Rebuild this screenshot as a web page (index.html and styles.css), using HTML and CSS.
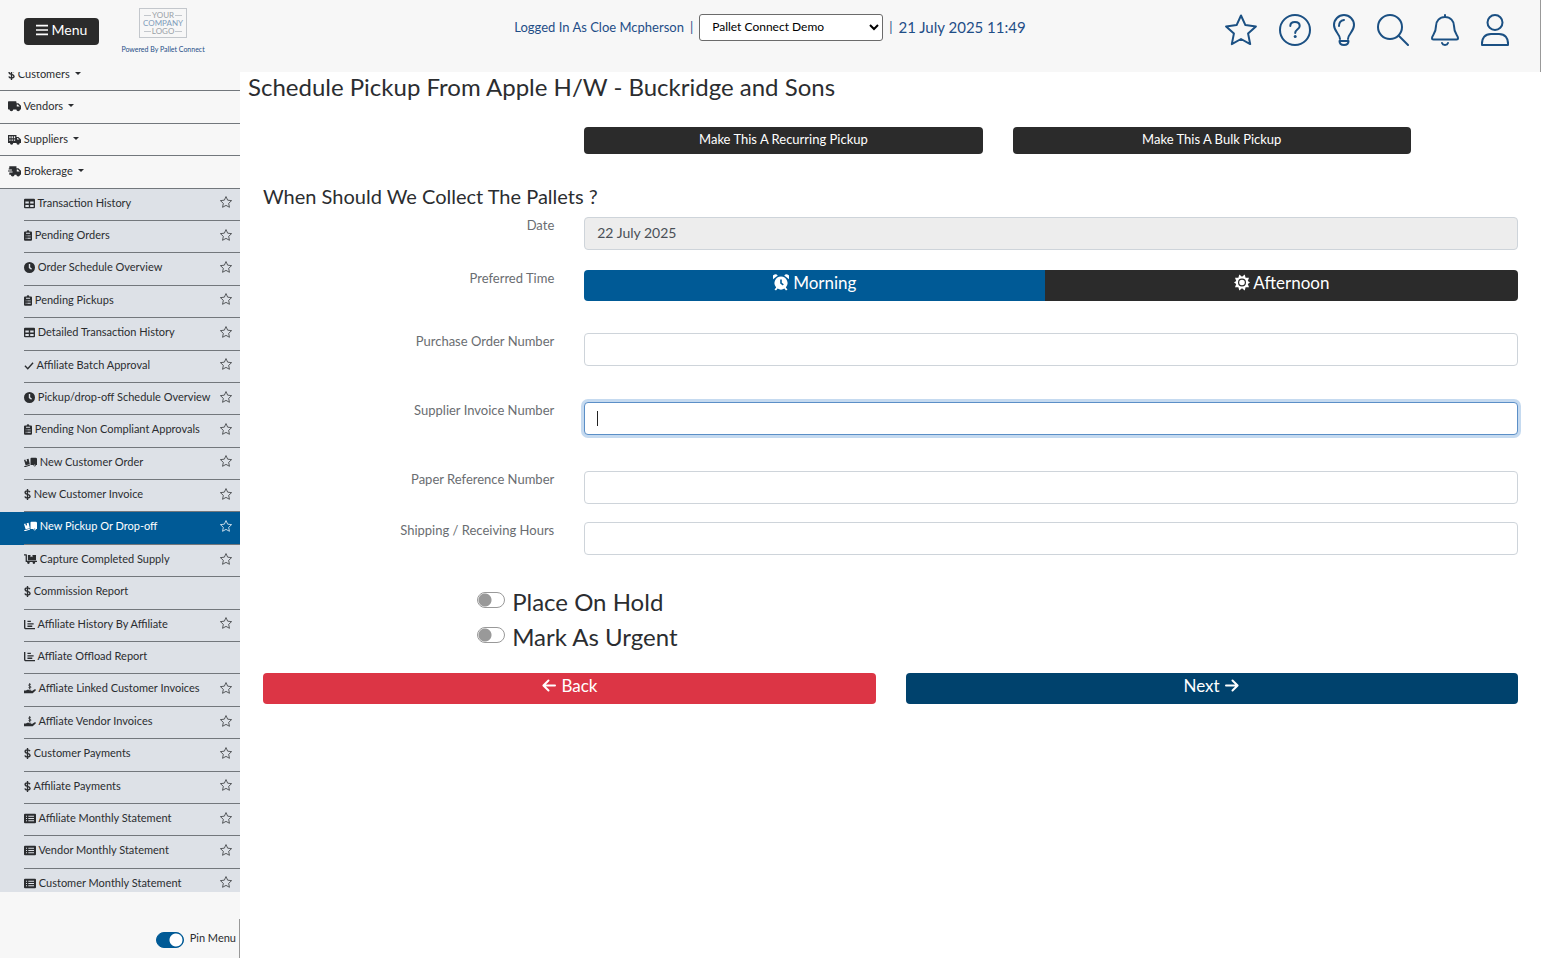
FILE: index.html
```html
<!DOCTYPE html>
<html lang="en">
<head>
    <meta charset="UTF-8">
    <title>Schedule Pickup</title>
    <link rel="stylesheet" href="styles.css">
</head>
<body>
    <!-- icon set -->
    <svg class="sprite" aria-hidden="true">
        <symbol id="bars" viewBox="0 0 14 16"><path d="M0 3h14M0 8h14M0 13h14" fill="none" stroke="currentColor" stroke-width="2"/></symbol>
        <symbol id="dollar" viewBox="0 0 10 16"><path d="M5 0v16M8.6 4.6C8 3.3 6.600 2.800 5 2.800 3 2.800 1.500 3.700 1.500 5.300c0 3.500 7.200 1.700 7.200 5.300 0 1.700-1.600 2.600-3.700 2.600-2 0-3.400-.8-3.900-2.200" fill="none" stroke="currentColor" stroke-width="2"/></symbol>
        <symbol id="truck" viewBox="0 0 20 16"><path fill-rule="evenodd" d="M1 0h11a1 1 0 0 1 1 1v2h3l4 4v5.500h-1.500a2.800 2.800 0 0 1-5.600 0H8a2.800 2.800 0 0 1-5.600 0H1a1 1 0 0 1-1-1V1a1 1 0 0 1 1-1zm12.500 4.800V8H18l-3-3.200z"/></symbol>
        <symbol id="truck-grid" viewBox="0 0 20 16"><path fill-rule="evenodd" d="M0 1h13v3h3l4 4v5.500h-2a2.500 2.500 0 0 1-5 0H8a2.500 2.500 0 0 1-5 0H0zm2 2v3h2V3zm3.500 0v3h2V3zM9 3v3h2V3zM2 8v2h2V8zm3.500 0v2h2V8zM9 8v2h2V8zm5-2.500V8h3.500L15 5.500z"/></symbol>
        <symbol id="truck-fast" viewBox="0 0 20 16"><path fill-rule="evenodd" d="M2 0h11v3h3l4 4v6h-1.500a2.800 2.800 0 0 1-5.600 0H10a2.800 2.800 0 0 1-5.600 0H2V9.500h5V8H0V6.500h6V5H1V3.500h1zm11.500 4.800V8H18l-3-3.200z"/></symbol>
        <symbol id="table" viewBox="0 0 16 16"><path fill-rule="evenodd" d="M1.500 1h13A1.500 1.500 0 0 1 16 2.500v11a1.500 1.500 0 0 1-1.500 1.500h-13A1.500 1.500 0 0 1 0 13.500v-11A1.500 1.500 0 0 1 1.500 1zM2 5v3h5V5zm7 0v3h5V5zM2 10v3h5v-3zm7 0v3h5v-3z"/></symbol>
        <symbol id="clipboard" viewBox="0 0 12 16"><path fill-rule="evenodd" d="M1.500 2H4a2 2 0 0 1 4 0h2.500A1.500 1.500 0 0 1 12 3.500v11a1.500 1.500 0 0 1-1.500 1.500h-9A1.500 1.500 0 0 1 0 14.500v-11A1.500 1.500 0 0 1 1.500 2zM3 4v1.200h6V4zM2.500 8v1.300h1.300V8zm2.500 0v1.300h5V8zm-2.500 3.500v1.300h1.300v-1.300zm2.500 0v1.300h5v-1.300z"/></symbol>
        <symbol id="clock" viewBox="0 0 16 16"><path fill-rule="evenodd" d="M8 0a8 8 0 1 1 0 16A8 8 0 0 1 8 0zM7 3v5.600l3.500 2.500 1-1.500L9 7.800V3z"/></symbol>
        <symbol id="check" viewBox="0 0 16 16"><path d="M1.500 8.500L6 13l8.500-9.500" fill="none" stroke="currentColor" stroke-width="2.200"/></symbol>
        <symbol id="loader" viewBox="0 0 20 16"><path fill-rule="evenodd" d="M10 2a1.500 1.500 0 0 1 1.500-1.500H18A2 2 0 0 1 20 2.500V12h-1.500a2 2 0 0 1-4 0H10zM0 4l2-.6 1 3.200 1.800-.5L4 3l3-.8 2 8.400-6.500 1.800zM0 13.600l9-2.300.5 1.500-7 2a2 2 0 0 1-2.500-1.200zM15.500 12a1 1 0 0 0 2 0 1 1 0 0 0-2 0z"/></symbol>
        <symbol id="dolly" viewBox="0 0 20 16"><path fill-rule="evenodd" d="M0 0h3.500a1 1 0 0 1 1 1v9H20v2h-3a2 2 0 1 1-3.600 0H8.600A2 2 0 1 1 5 12H3.500a1 1 0 0 1-1-1V2H0zM6 1h4v3.500l1.500-1 1.500 1V1h5.500v8H6z"/></symbol>
        <symbol id="chart" viewBox="0 0 16 16"><path d="M1 1.500v11A1.500 1.500 0 0 0 2.500 14H16M5 3.500h5M5 7h9M5 10.500h7" fill="none" stroke="currentColor" stroke-width="2"/></symbol>
        <symbol id="hand" viewBox="0 0 18 16"><path d="M0 11h3l2-1.300h5.500c1 0 1 1.500 0 1.600H8v.6h4l4-2.700c1.300-.7 2.500.6 1.500 1.700L13 15H0z"/><path d="M8.500 0v9M10.300 2.300C9.500 1.300 7 1.400 7 3c0 1.800 3.500 1 3.500 2.900 0 1.600-2.800 1.700-3.700.6" fill="none" stroke="currentColor" stroke-width="1.300"/></symbol>
        <symbol id="list" viewBox="0 0 18 16"><path fill-rule="evenodd" d="M1.500 1h15A1.500 1.500 0 0 1 18 2.500v11a1.500 1.500 0 0 1-1.500 1.500h-15A1.500 1.500 0 0 1 0 13.500v-11A1.500 1.500 0 0 1 1.500 1zM3 4v1.500h1.500V4zm3.500 0v1.500H15V4zM3 7.300v1.500h1.500V7.300zm3.500 0v1.500H15V7.300zM3 10.500V12h1.500v-1.500zm3.500 0V12H15v-1.500z"/></symbol>
        <symbol id="star" viewBox="0 0 32 32"><path d="M16 1.500l4.400 9.600 10.500 1.300-7.800 7.200 2.100 10.500L16 25l-9.200 5.100 2.100-10.500-7.800-7.200 10.500-1.300z" fill="none" stroke="currentColor" stroke-width="2" stroke-linejoin="round"/></symbol>
        <symbol id="alarm" viewBox="0 0 16 16"><path fill-rule="evenodd" d="M8 2a6.500 6.500 0 0 1 4.800 10.900L14.500 15 13 16l-1.600-1.900a6.500 6.500 0 0 1-6.800 0L3 16l-1.500-1 1.700-2.100A6.500 6.500 0 0 1 8 2zM7.200 5v4l2.600 2 1-1.300-2-1.500V5zM0 4.700A3 3 0 0 1 4.800 1zM16 4.700A3 3 0 0 0 11.200 1z"/></symbol>
        <symbol id="sun" viewBox="0 0 16 16"><path fill-rule="evenodd" d="M8 2.200L10.700 0l.9 3.300L15 3.200 13.800 6.400 16 8l-2.200 1.600L15 12.800l-3.400-.1-.9 3.300L8 13.800 5.300 16l-.9-3.300-3.400.1 1.200-3.200L0 8l2.200-1.600L1 3.200l3.400.1L5.300 0zM8 4a4 4 0 1 0 0 8 4 4 0 0 0 0-8zm0 1.200a2.800 2.800 0 1 1 0 5.600 2.800 2.800 0 0 1 0-5.600z"/></symbol>
        <symbol id="left" viewBox="0 0 16 16"><path d="M14 8H2.500M7.500 3L2.400 8l5.100 5" fill="none" stroke="currentColor" stroke-width="2" stroke-linecap="round" stroke-linejoin="round"/></symbol>
        <symbol id="right" viewBox="0 0 16 16"><path d="M2 8h11.500M8.500 3l5.100 5-5.100 5" fill="none" stroke="currentColor" stroke-width="2" stroke-linecap="round" stroke-linejoin="round"/></symbol>
    </svg>

    <header class="topbar">
        <div class="brand">
            <button type="button" class="btn btn-menu"><svg class="icon w12"><use href="#bars"/></svg> Menu</button>
            <div class="company">
                <div class="logo">
                    <span class="logo-side">YOUR</span>
                    <span class="logo-mid">COMPANY</span>
                    <span class="logo-side">LOGO</span>
                </div>
                <div class="powered">Powered By Pallet Connect</div>
            </div>
        </div>
        <div class="session">
            <span>Logged In As Cloe Mcpherson</span>
            <span>|</span>
            <select aria-label="Company"><option>Pallet Connect Demo</option></select>
            <span>|</span>
            <span class="now">21 July 2025 11:49</span>
        </div>
        <nav class="tools">
            <a href="#" aria-label="Favourites"><svg width="32" height="32"><use href="#star"/></svg></a>
            <a href="#" aria-label="Help"><svg width="32" height="32" viewBox="0 0 32 32"><circle cx="16" cy="16" r="15"/><path d="M11.300 12c0-2.600 2-4 4.600-4s4.800 1.400 4.800 3.900c0 3.300-4.500 3.300-4.500 7.100"/><circle class="dot" cx="16.200" cy="22.500" r="1.500"/></svg></a>
            <a href="#" aria-label="Tips"><svg width="22" height="32" viewBox="0 0 22 32"><path d="M7 25c0-5-6-7.500-6-14a10 10 0 0 1 20 0c0 6.500-6 9-6 14M6 12c0-3.500 2-5.500 5-6M6.500 27h9c0 2.500-2 4-4.500 4s-4.500-1.500-4.500-4z"/></svg></a>
            <a href="#" aria-label="Search"><svg width="32" height="32" viewBox="0 0 32 32"><circle cx="13" cy="13" r="12"/><path d="M22 22l9 9"/></svg></a>
            <a href="#" aria-label="Notifications"><svg width="28" height="32" viewBox="0 0 28 32"><path d="M14 1v2M14 3c-5.500 0-9 4-9 9 0 8-4 9-4 12 0 1 .5 1.500 1.500 1.500h23c1 0 1.500-.5 1.500-1.500 0-3-4-4-4-12 0-5-3.500-9-9-9zM11 29c.8 2.500 5.200 2.500 6 0"/></svg></a>
            <a href="#" aria-label="Account"><svg width="28" height="32" viewBox="0 0 28 32"><circle cx="14" cy="8.500" r="7.500"/><path d="M1 31c-.5-7 3-11 9-11h8c6 0 9.500 4 9 11z"/></svg></a>
        </nav>
    </header>

    <div class="page">
        <aside class="sidebar">
            <nav class="menu">
                <ul class="menu-top">
                    <li><a href="#"><svg class="icon w7"><use href="#dollar"/></svg> Customers <i class="caret"></i></a></li>
                    <li><a href="#"><svg class="icon w13"><use href="#truck"/></svg> Vendors <i class="caret"></i></a></li>
                    <li><a href="#"><svg class="icon w13"><use href="#truck-grid"/></svg> Suppliers <i class="caret"></i></a></li>
                    <li><a href="#"><svg class="icon w13"><use href="#truck-fast"/></svg> Brokerage <i class="caret"></i></a></li>
                </ul>
                <ul class="menu-sub">
                    <li><a href="#"><svg class="icon w11"><use href="#table"/></svg> Transaction History</a><svg class="fav"><use href="#star"/></svg></li>
                    <li><a href="#"><svg class="icon w8"><use href="#clipboard"/></svg> Pending Orders</a><svg class="fav"><use href="#star"/></svg></li>
                    <li><a href="#"><svg class="icon w11"><use href="#clock"/></svg> Order Schedule Overview</a><svg class="fav"><use href="#star"/></svg></li>
                    <li><a href="#"><svg class="icon w8"><use href="#clipboard"/></svg> Pending Pickups</a><svg class="fav"><use href="#star"/></svg></li>
                    <li><a href="#"><svg class="icon w11"><use href="#table"/></svg> Detailed Transaction History</a><svg class="fav"><use href="#star"/></svg></li>
                    <li><a href="#"><svg class="icon w10"><use href="#check"/></svg> Affiliate Batch Approval</a><svg class="fav"><use href="#star"/></svg></li>
                    <li><a href="#"><svg class="icon w11"><use href="#clock"/></svg> Pickup/drop-off Schedule Overview</a><svg class="fav"><use href="#star"/></svg></li>
                    <li><a href="#"><svg class="icon w8"><use href="#clipboard"/></svg> Pending Non Compliant Approvals</a><svg class="fav"><use href="#star"/></svg></li>
                    <li><a href="#"><svg class="icon w13"><use href="#loader"/></svg> New Customer Order</a><svg class="fav"><use href="#star"/></svg></li>
                    <li><a href="#"><svg class="icon w7"><use href="#dollar"/></svg> New Customer Invoice</a><svg class="fav"><use href="#star"/></svg></li>
                    <li class="active"><a href="#"><svg class="icon w13"><use href="#loader"/></svg> New Pickup Or Drop-off</a><svg class="fav"><use href="#star"/></svg></li>
                    <li><a href="#"><svg class="icon w13"><use href="#dolly"/></svg> Capture Completed Supply</a><svg class="fav"><use href="#star"/></svg></li>
                    <li><a href="#"><svg class="icon w7"><use href="#dollar"/></svg> Commission Report</a></li>
                    <li><a href="#"><svg class="icon w11"><use href="#chart"/></svg> Affiliate History By Affiliate</a><svg class="fav"><use href="#star"/></svg></li>
                    <li><a href="#"><svg class="icon w11"><use href="#chart"/></svg> Affliate Offload Report</a></li>
                    <li><a href="#"><svg class="icon w12"><use href="#hand"/></svg> Affliate Linked Customer Invoices</a><svg class="fav"><use href="#star"/></svg></li>
                    <li><a href="#"><svg class="icon w12"><use href="#hand"/></svg> Affliate Vendor Invoices</a><svg class="fav"><use href="#star"/></svg></li>
                    <li><a href="#"><svg class="icon w7"><use href="#dollar"/></svg> Customer Payments</a><svg class="fav"><use href="#star"/></svg></li>
                    <li><a href="#"><svg class="icon w7"><use href="#dollar"/></svg> Affiliate Payments</a><svg class="fav"><use href="#star"/></svg></li>
                    <li><a href="#"><svg class="icon w12"><use href="#list"/></svg> Affiliate Monthly Statement</a><svg class="fav"><use href="#star"/></svg></li>
                    <li><a href="#"><svg class="icon w12"><use href="#list"/></svg> Vendor Monthly Statement</a><svg class="fav"><use href="#star"/></svg></li>
                    <li><a href="#"><svg class="icon w12"><use href="#list"/></svg> Customer Monthly Statement</a><svg class="fav"><use href="#star"/></svg></li>
                </ul>
            </nav>
            <div class="pin">
                <div class="pin-row">
                    <input type="checkbox" class="switch" id="pin" checked>
                    <label for="pin">Pin Menu</label>
                </div>
            </div>
        </aside>

        <main class="content">
            <h1>Schedule Pickup From Apple H/W - Buckridge and Sons</h1>
            <form>
                <div class="row kinds">
                    <button type="button" class="btn btn-dark">Make This A Recurring Pickup</button>
                    <button type="button" class="btn btn-dark">Make This A Bulk Pickup</button>
                </div>

                <h2>When Should We Collect The Pallets ?</h2>

                <div class="row field">
                    <label for="date">Date</label>
                    <input type="text" id="date" value="22 July 2025" readonly>
                </div>
                <div class="row field time">
                    <span class="label">Preferred Time</span>
                    <div class="btn-group">
                        <button type="button" class="btn btn-lg btn-primary"><svg class="icon w16"><use href="#alarm"/></svg> Morning</button>
                        <button type="button" class="btn btn-lg btn-dark"><svg class="icon w16"><use href="#sun"/></svg> Afternoon</button>
                    </div>
                </div>
                <div class="row field wide">
                    <label for="po">Purchase Order Number</label>
                    <input type="text" id="po">
                </div>
                <div class="row field wide">
                    <label for="invoice">Supplier Invoice Number</label>
                    <input type="text" id="invoice" autofocus>
                </div>
                <div class="row field">
                    <label for="paper">Paper Reference Number</label>
                    <input type="text" id="paper">
                </div>
                <div class="row field">
                    <label for="hours">Shipping / Receiving Hours</label>
                    <input type="text" id="hours">
                </div>

                <div class="row options">
                    <div class="option">
                        <input type="checkbox" class="switch" id="hold">
                        <label for="hold">Place On Hold</label>
                    </div>
                    <div class="option">
                        <input type="checkbox" class="switch" id="urgent">
                        <label for="urgent">Mark As Urgent</label>
                    </div>
                </div>

                <div class="row actions">
                    <button type="button" class="btn btn-lg btn-danger"><svg class="icon w16"><use href="#left"/></svg> Back</button>
                    <button type="button" class="btn btn-lg btn-next">Next <svg class="icon w16"><use href="#right"/></svg></button>
                </div>
            </form>
        </main>
    </div>
</body>
</html>
```

FILE: styles.css
```css
* {
    box-sizing: border-box;
}

body {
    margin: 0;
    height: 100vh;
    display: flex;
    flex-direction: column;
    overflow: hidden;
    font-family: Lato, "Open Sans", sans-serif;
    font-size: 13px;
    color: #2b2d30;
    background: #fff;
}

button, input, select {
    font-family: inherit;
}

a {
    color: inherit;
    text-decoration: none;
}

ul {
    list-style: none;
    margin: 0;
    padding: 0;
}

.sprite {
    display: none;
}

.icon {
    height: 1em;
    fill: currentColor;
    vertical-align: -2px;
}

.w7 { width: 7px; }
.w8 { width: 8px; }
.w10 { width: 10px; }
.w11 { width: 11px; }
.w12 { width: 12px; }
.w13 { width: 13px; }
.w16 { width: 16px; }

/* top bar */
.topbar {
    flex: none;
    height: 72px;
    display: grid;
    grid-template-columns: 1fr auto 1fr;
    align-items: start;
    background: #f7f7f7;
    border-right: 1px solid #999;
    position: relative;
    z-index: 1;
}

.brand {
    display: flex;
    gap: 22px;
    padding: 8px 0 0 24px;
}

.company {
    display: flex;
    flex-direction: column;
    align-items: center;
    gap: 7px;
}

.logo {
    width: 48px;
    height: 30px;
    border: 1px solid #c3c7cc;
    display: flex;
    flex-direction: column;
    align-items: center;
    justify-content: center;
    font-size: 8px;
    line-height: 8px;
    color: #999fa6;
}

.logo-mid {
    color: #7f9cba;
}

.logo-side {
    display: flex;
    align-items: center;
    gap: 1px;
}

.logo-side::before,
.logo-side::after {
    content: "";
    width: 7px;
    border-top: 1px solid #c3c7cc;
}

.powered {
    font-size: 7px;
    line-height: 8px;
    color: #1f4e87;
}

.session {
    display: flex;
    align-items: center;
    gap: 6px;
    padding-top: 14px;
    color: #1f4e87;
}

.session span {
    padding-bottom: 2px;
}

.session .now {
    font-size: 15px;
}

.session select {
    width: 184px;
    height: 27px;
    padding: 0 8px 2px;
    font-size: 12px;
    color: #000;
    background: #fff;
    border: 1px solid #6b6b6b;
    border-radius: 3px;
}

.tools {
    display: flex;
    justify-content: flex-end;
    gap: 22px;
    padding: 14px 31px 0 0;
    color: #1b5083;
}

.tools svg {
    display: block;
    fill: none;
    stroke: currentColor;
    stroke-width: 2;
    stroke-linecap: round;
    stroke-linejoin: round;
}

.tools .dot {
    fill: currentColor;
    stroke: none;
}

/* buttons */
.btn {
    border: 0;
    border-radius: 4px;
    color: #fff;
    font-size: 13px;
    line-height: 20px;
    padding: 2px 12px 5px;
}

.btn-menu {
    height: 27px;
    margin-top: 10px;
    background: #2b2b2b;
    font-size: 14px;
    padding: 2px 12px 5px;
}

.btn-lg {
    font-size: 17px;
    line-height: 24px;
    padding: 1px 12px 6px;
}

.btn-dark { background: #2b2b2b; }
.btn-primary { background: #005a96; }
.btn-danger { background: #dc3545; }
.btn-next { background: #00426d; }

.btn-group {
    display: flex;
}

.btn-group .btn {
    flex: 1 1 auto;
}

.btn-group .btn:first-child {
    border-radius: 4px 0 0 4px;
}

.btn-group .btn:last-child {
    border-radius: 0 4px 4px 0;
}

/* side menu */
.page {
    flex: 1;
    display: flex;
    min-height: 0;
}

.sidebar {
    width: 240px;
    flex: none;
    display: flex;
    flex-direction: column;
    background: #f7f7f7;
    font-size: 11px;
}

.menu {
    flex: 1;
    min-height: 0;
    overflow: hidden;
    line-height: 1.4;
}

/* list is scrolled a little under the top bar */
.menu-top {
    margin-top: -13px;
}

.menu li {
    display: flex;
    align-items: center;
    justify-content: space-between;
    border-bottom: 1px solid #72777c;
}

.menu-top a {
    flex: 1;
    padding: 7px 8px 9px;
}

.caret {
    display: inline-block;
    margin-left: 2px;
    vertical-align: 3px;
    border: 3px solid transparent;
    border-top-color: currentColor;
    border-bottom: 0;
}

.menu-sub {
    padding-left: 24px;
    background: #dde1e7;
}

.menu-sub a {
    padding: 6px 0 10px;
    white-space: nowrap;
}

.fav {
    width: 12px;
    height: 12px;
    margin: 0 8px 4px 0;
}

.menu-sub .active {
    color: #fff;
    background: #005a96;
    box-shadow: -24px 0 0 #005a96;
}

.pin {
    flex: none;
    height: 66px;
    display: flex;
    align-items: flex-end;
}

.pin-row {
    flex: 1;
    height: 39px;
    display: flex;
    justify-content: flex-end;
    align-items: center;
    gap: 6px;
    padding: 2px 3px 0 0;
    border-right: 1px solid #999;
}

.pin-row label {
    padding-bottom: 4px;
}

/* switches */
.switch {
    appearance: none;
    flex: none;
    width: 28px;
    height: 16px;
    margin: 0;
    border: 1px solid #999;
    border-radius: 8px;
    background: radial-gradient(circle at 7px 7px, #999 6px, transparent 7px) #fff;
}

.switch:checked {
    border-color: #005a96;
    background: radial-gradient(circle at 19px 7px, #fff 6px, transparent 7px) #005a96;
}

/* form */
.content {
    flex: 1;
    min-width: 0;
    padding: 0 8px;
}

h1, h2 {
    margin: 0;
    font-weight: 400;
}

h1 {
    font-size: 24px;
    line-height: 30px;
}

h2 {
    padding-left: 15px;
    margin-top: 28px;
    font-size: 20px;
    line-height: 28px;
}

.row {
    display: grid;
    grid-template-columns: repeat(12, 1fr);
    column-gap: 30px;
    padding: 0 15px;
}

.kinds {
    margin-top: 25px;
}

.kinds .btn {
    grid-column: span 4;
}

.kinds .btn:first-child {
    grid-column: 4 / span 4;
}

.field {
    margin-top: 18px;
}

h2 + .field {
    margin-top: 7px;
}

.time {
    margin-top: 20px;
    margin-bottom: 32px;
}

.wide {
    margin-bottom: 36px;
}

.time + .field,
.wide + .field {
    margin-top: 0;
}

.field label,
.label {
    grid-column: span 3;
    text-align: right;
    line-height: 16px;
    color: #6a6d71;
}

.field input,
.btn-group {
    grid-column: span 9;
}

.field input {
    height: 33px;
    width: 100%;
    padding: 0 12px 2px;
    font-size: 14px;
    color: #495057;
    border: 1px solid #ced4da;
    border-radius: 4px;
    background: #fff;
}

.field input[readonly] {
    background: #ededed;
}

/* own text cursor, always on while the box has focus */
.field input:focus {
    outline: 0;
    caret-color: transparent;
    border-color: #5b8fc7;
    box-shadow: 0 0 0 3px #c5daf0;
    background: linear-gradient(#222, #222) 12px center / 1px 15px no-repeat #fff;
}

.options {
    margin-top: 29px;
}

.option {
    grid-column: 3 / -1;
    display: flex;
    align-items: flex-start;
    gap: 7px;
    font-size: 24px;
    line-height: 35px;
}

.option .switch {
    margin-top: 8px;
}

.actions {
    margin-top: 19px;
}

.actions .btn {
    grid-column: span 6;
}
```
